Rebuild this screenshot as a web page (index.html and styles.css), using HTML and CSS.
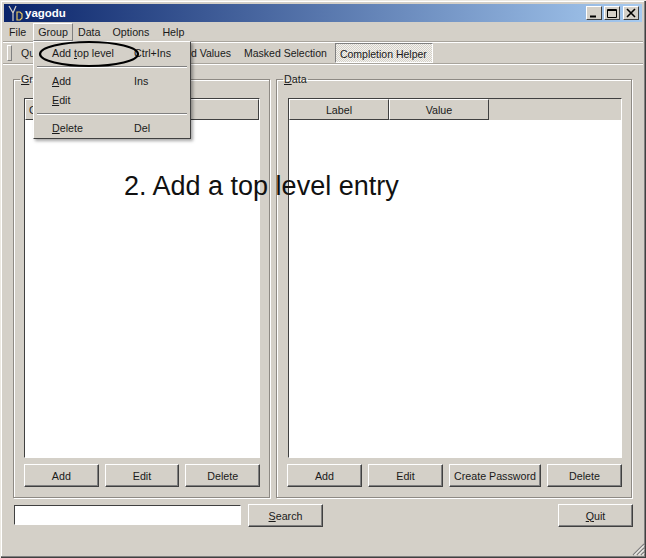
FILE: index.html
```html
<!DOCTYPE html>
<html lang="en">
<head>
<meta charset="utf-8">
<title>yagodu</title>
<link rel="stylesheet" href="styles.css">
</head>
<body>
<div class="window">
  <div class="titlebar">
    <svg class="app-icon" width="18" height="17" viewBox="0 0 18 17"><path d="M2 1 L6 8 L6 16 M9 1 L6 8" fill="none" stroke="#d4d0c8" stroke-width="1.2"/><path d="M10 7 L10 15 L13 15 L15 13 L15 9 L13 7 Z" fill="none" stroke="#e8c860" stroke-width="1.2"/></svg>
    <span class="title">yagodu</span>
    <div class="win-buttons">
      <span class="win-btn"><svg width="14" height="12" viewBox="0 0 14 12"><path d="M3 9.5H9" stroke="#000" stroke-width="2"/></svg></span>
      <span class="win-btn"><svg width="14" height="12" viewBox="0 0 14 12"><path d="M2.5 2.5H11.5V10.5H2.5Z M2.5 3.5H11.5" fill="none" stroke="#000"/></svg></span>
      <span class="win-btn close"><svg width="14" height="12" viewBox="0 0 14 12"><path d="M3 2L11 10M11 2L3 10" stroke="#000" stroke-width="1.6"/></svg></span>
    </div>
  </div>
  <div class="menubar">
    <span class="menu-item file">File</span>
    <span class="menu-item open">Group</span>
    <span class="menu-item">Data</span>
    <span class="menu-item options">Options</span>
    <span class="menu-item">Help</span>
  </div>
  <div class="toolbar">
    <span class="handle"></span>
    <span class="tool quick">Quick Selection</span>
    <span class="tool predefined">Predefined Values</span>
    <span class="tool">Masked Selection</span>
    <span class="tool checked">Completion Helper</span>
  </div>
  <div class="main">
    <fieldset class="group left">
      <legend><u>G</u>roup</legend>
      <div class="table">
        <div class="header"><span class="col col-full">Group</span></div>
        <div class="rows"></div>
      </div>
      <div class="buttons">
        <button class="btn">Add</button>
        <button class="btn">Edit</button>
        <button class="btn">Delete</button>
      </div>
    </fieldset>
    <fieldset class="group right">
      <legend><u>D</u>ata</legend>
      <div class="table">
        <div class="header"><span class="col col-center">Label</span><span class="col col-center">Value</span></div>
        <div class="rows"></div>
      </div>
      <div class="buttons">
        <button class="btn">Add</button>
        <button class="btn">Edit</button>
        <button class="btn wide">Create Password</button>
        <button class="btn">Delete</button>
      </div>
    </fieldset>
  </div>
  <div class="bottom">
    <input class="search" type="text" aria-label="Search">
    <button class="btn"><u>S</u>earch</button>
    <span class="spacer"></span>
    <button class="btn"><u>Q</u>uit</button>
  </div>
  <svg class="grip" width="14" height="14" viewBox="0 0 14 14"><path d="M13 2L2 13M13 6L6 13M13 10L10 13" stroke="#808080" stroke-width="1.2"/><path d="M13 3.5L3.5 13M13 7.5L7.5 13M13 11.5L11.5 13" stroke="#fff"/></svg>

  <div class="popup">
    <div class="pop-row"><span>Add <u>t</u>op level</span><span>Ctrl+Ins</span></div>
    <div class="pop-sep"></div>
    <div class="pop-row"><span><u>A</u>dd</span><span>Ins</span></div>
    <div class="pop-row"><span><u>E</u>dit</span><span></span></div>
    <div class="pop-sep"></div>
    <div class="pop-row"><span><u>D</u>elete</span><span>Del</span></div>
  </div>
  <svg class="ellipse" width="102" height="28" viewBox="0 0 102 28"><ellipse cx="51" cy="14" rx="49" ry="12" fill="none" stroke="#000" stroke-width="2.2"/></svg>
  <div class="note">2. Add a top level entry</div>
</div>
</body>
</html>
```
FILE: styles.css
```css
* { box-sizing: border-box; }
html, body { margin: 0; padding: 0; }
body { width: 646px; height: 558px; overflow: hidden; font: 10.7px/13px "Liberation Sans", sans-serif; color: #1a1a1a; }
u { text-decoration-thickness: 1px; text-underline-offset: 1px; }

.window {
  position: relative;
  width: 646px; height: 558px;
  padding: 4px 4px 4px 4px;
  background: #d4d0c8;
  display: flex; flex-direction: column;
  box-shadow: inset 1px 1px 0 #ece9e2, inset -1px -1px 0 #404040, inset -2px -2px 0 #808080, inset 2px 2px 0 #fff;
}

.titlebar {
  height: 18px; flex: none;
  display: flex; align-items: center;
  background: linear-gradient(90deg, #0a246a, #a6caf0);
  color: #fff; font-weight: 700; font-size: 11px;
}
.app-icon { margin: 0 0 0 3px; }
.title { font-size: 11.5px; }
.win-buttons { margin-left: auto; margin-right: 3px; display: flex; gap: 2px; }
.win-btn {
  width: 16px; height: 14px; display: block;
  background: #d4d0c8;
  border: 1px solid; border-color: #fff #404040 #404040 #fff;
}
.win-btn svg { display: block; }
.win-btn.close { margin-left: 1px; }

.menubar { height: 18px; margin-top: 1px; flex: none; display: flex; gap: 1px; align-items: stretch; }
.menu-item { line-height: 17px; border: 1px solid transparent; padding: 0 4px; }
.menu-item.file { margin-right: 1px; }
.menu-item.open { border-color: #fff #808080 #808080 #fff; margin-right: -1px; }
.menu-item.options { margin-left: 1px; margin-right: 2px; }

.toolbar {
  height: 23px; flex: none; margin: 0 -1px;
  display: flex; align-items: center;
  border-top: 1px solid #a8a49c; border-bottom: 1px solid #a8a49c;
  box-shadow: inset 0 1px 0 #fff, 0 1px 0 #fff;
  font-size: 10.5px; line-height: 14px;
}
.handle { width: 5px; height: 16px; margin-left: 4px; margin-right: 8px; border: 1px solid; border-color: #fff #808080 #808080 #fff; }
.tool { padding: 0 4px; margin-right: 4px; }
.quick { margin-left: -3px; margin-right: 44px; }
.predefined { margin-right: 5px; }
.checked {
  width: 98px; height: 20px; margin: 1px 0 0; line-height: 20px; padding: 0 0 0 4px; white-space: nowrap;
  border: 1px solid; border-color: #808080 #fff #fff #808080;
  background: repeating-conic-gradient(#f4f3ef 0 25%, #d4d0c8 0 50%) 0 0 / 2px 2px;
}

.main { flex: none; height: 434px; display: flex; gap: 6px; padding: 9px 5px 0 9px; }
.group {
  margin: 0; padding: 12px 9px 0 10px; min-width: 0;
  border: 1px solid #8e8a84;
  box-shadow: 1px 1px 0 #fff, inset 1px 1px 0 #fff;
  display: flex; flex-direction: column;
}
.group legend { padding: 0 1px; margin-left: -4px; line-height: 13px; }
.left { width: 257px; }
.right { width: 356px; }
.table { width: 236px; height: 360px; display: flex; flex-direction: column;
  border: 1px solid; border-color: #404040 #fff #fff #404040; }
.right .table { width: 334px; margin-left: 1px; }
.header { height: 21px; flex: none; display: flex; background: #d4d0c8; }
.col { height: 21px; line-height: 20px; border: 1px solid; border-color: #fff #404040 #404040 #fff; }
.col-full { width: 234px; padding-left: 3px; }
.col-center { width: 100px; text-align: center; }
.rows { flex: 1; background: #fff; }

.buttons { display: flex; gap: 6px; margin-top: 6px; }
.btn {
  width: 75px; height: 23px; padding: 1px 0 0;
  font: inherit; color: inherit;
  background: #d4d0c8;
  border: 1px solid; border-color: #fff #404040 #404040 #fff;
  box-shadow: inset -1px -1px 0 #808080;
}
.right .buttons .btn.wide { width: 92px; }

.bottom { display: flex; align-items: flex-start; padding: 6px 9px 0 10px; }
.search { width: 227px; height: 20px; margin: 1px 7px 0 0; background: #fff;
  border: 1px solid; border-color: #404040 #fff #fff #404040; }
.spacer { flex: 1; }

.grip { position: absolute; right: 1px; bottom: 2px; }

.popup {
  position: absolute; left: 33px; top: 41px; width: 158px; height: 98px;
  padding: 2px 3px 0;
  background: #d4d0c8;
  border: 1px solid; border-color: #fff #404040 #404040 #fff;
  box-shadow: 2px 2px 3px rgba(0,0,0,.35);
}
.pop-row { height: 19px; line-height: 18px; padding-left: 15px; display: grid; grid-template-columns: 82px 1fr; }
.pop-sep { height: 2px; margin: 3px 0 4px; border-top: 1px solid #808080; border-bottom: 1px solid #fff; }
.ellipse { position: absolute; left: 38px; top: 40px; }
.note { position: absolute; left: 124px; top: 171px; font: 27px/30px "Liberation Sans", sans-serif; color: #111; white-space: nowrap; }
```
